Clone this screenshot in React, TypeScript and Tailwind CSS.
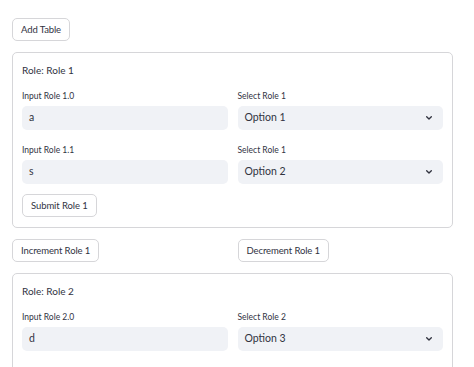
const font = { fontFamily: '"Lato", "Liberation Sans", sans-serif' };

function Button({ children }: { children: string }) {
  return (
    <button className="flex h-[23px] items-center rounded-[5px] border border-[#d6d6d9] bg-white px-[8px] text-[9.5px] leading-none tracking-[-0.1px] text-[#31333f]">
      {children}
    </button>
  );
}

function Chevron() {
  return (
    <svg width="8" height="8" viewBox="0 0 24 24" fill="none" stroke="#31333f" strokeWidth="4" strokeLinecap="round" strokeLinejoin="round">
      <path d="M5 8l7 7 7-7" />
    </svg>
  );
}

function Field({ label, value, select }: { label: string; value: string; select?: boolean }) {
  return (
    <div className="flex flex-col">
      <div className="mb-[4px] h-[12px] text-[8.5px] leading-[12px] text-[#31333f]">{label}</div>
      <div className="flex h-[24px] items-center justify-between rounded-[5px] bg-[#f0f2f6] pl-[7px] pr-[10px] text-[10.5px] text-[#31333f]">
        <span>{value}</span>
        {select && <Chevron />}
      </div>
    </div>
  );
}

interface Row {
  input: string;
  inputValue: string;
  select: string;
  selectValue: string;
}

function RoleCard({ role, rows, submit }: { role: string; rows: Row[]; submit?: boolean }) {
  return (
    <section className="rounded-[5px] border border-[#d6d6d9] px-[9px] pb-[10px] pt-[10px]">
      <h3 className="h-[14px] text-[10px] leading-[14px] text-[#31333f]">Role: {role}</h3>
      <div className="mt-[13px] flex flex-col gap-[14px]">
        {rows.map((r) => (
          <div key={r.input} className="grid grid-cols-2 gap-[10px]">
            <Field label={r.input} value={r.inputValue} />
            <Field label={r.select} value={r.selectValue} select />
          </div>
        ))}
      </div>
      {submit && (
        <div className="mt-[10px] flex">
          <Button>{`Submit Role ${role.slice(-1)}`}</Button>
        </div>
      )}
    </section>
  );
}

export default function App() {
  return (
    <div className="min-h-screen bg-white pt-[18px]" style={font}>
      <div className="ml-[12px] flex w-[441px] flex-col gap-[11px]">
        <div className="flex">
          <Button>Add Table</Button>
        </div>
        <RoleCard
          role="Role 1"
          submit
          rows={[
            { input: 'Input Role 1.0', inputValue: 'a', select: 'Select Role 1', selectValue: 'Option 1' },
            { input: 'Input Role 1.1', inputValue: 's', select: 'Select Role 1', selectValue: 'Option 2' },
          ]}
        />
        <div className="grid grid-cols-2 gap-[10px]">
          <div className="flex">
            <Button>Increment Role 1</Button>
          </div>
          <div className="flex">
            <Button>Decrement Role 1</Button>
          </div>
        </div>
        <RoleCard
          role="Role 2"
          submit
          rows={[
            { input: 'Input Role 2.0', inputValue: 'd', select: 'Select Role 2', selectValue: 'Option 3' },
            { input: 'Input Role 2.1', inputValue: 'f', select: 'Select Role 2', selectValue: 'Option 1' },
          ]}
        />
      </div>
    </div>
  );
}
